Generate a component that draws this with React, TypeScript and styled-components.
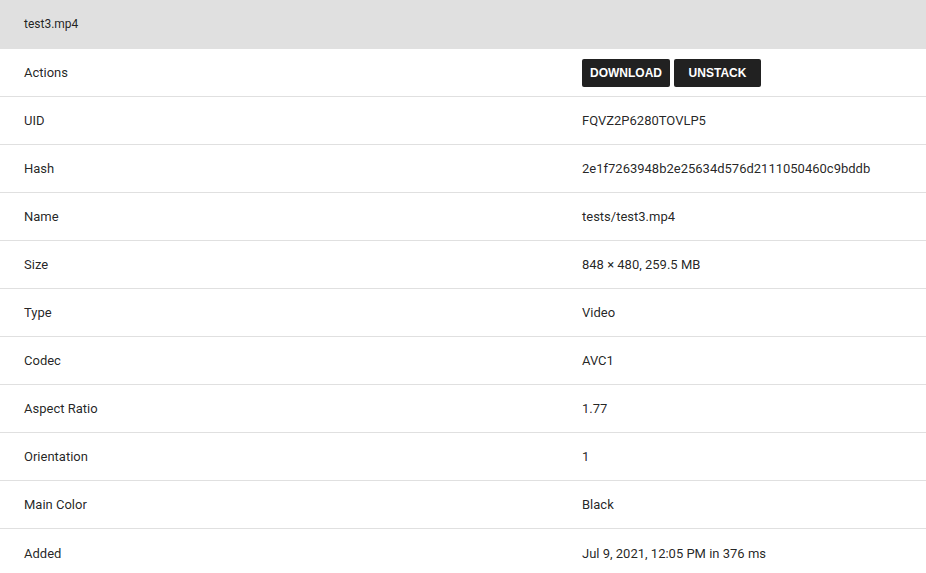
import React from "react";
import styled, { createGlobalStyle } from "styled-components";

const Global = createGlobalStyle`
  html, body { margin: 0; padding: 0; background: #fff; }
  body { font-family: Roboto, "Noto Sans", sans-serif; overflow: hidden; }
`;

const Table = styled.div`
  width: 926px;
  display: flex;
  flex-direction: column;
`;

const Header = styled.div`
  height: 49px;
  box-sizing: border-box;
  background: #e0e0e0;
  display: flex;
  align-items: center;
  padding: 0 24px 2px;
  font-size: 12px;
  color: rgba(0, 0, 0, 0.87);
`;

const Row = styled.div`
  height: 48px;
  display: grid;
  grid-template-columns: 582px 1fr;
  align-items: center;
  border-bottom: 1px solid #e0e0e0;
  box-sizing: border-box;
  font-size: 13px;
  color: rgba(0, 0, 0, 0.87);
  &:last-child { border-bottom: none; }
`;

const Label = styled.div`
  padding-left: 24px;
`;

const Value = styled.div`
  display: flex;
  gap: 4px;
  align-items: center;
`;

const Button = styled.button`
  height: 28px;
  padding: 0 8px;
  min-width: 87px;
  border: none;
  border-radius: 2px;
  background: #212121;
  color: #fff;
  font-family: "Liberation Sans", Arial, sans-serif;
  font-weight: 700;
  font-size: 12px;
  text-transform: uppercase;
  cursor: pointer;
`;

const rows: [string, string][] = [
  ["UID", "FQVZ2P6280TOVLP5"],
  ["Hash", "2e1f7263948b2e25634d576d2111050460c9bddb"],
  ["Name", "tests/test3.mp4"],
  ["Size", "848 × 480, 259.5 MB"],
  ["Type", "Video"],
  ["Codec", "AVC1"],
  ["Aspect Ratio", "1.77"],
  ["Orientation", "1"],
  ["Main Color", "Black"],
  ["Added", "Jul 9, 2021, 12:05 PM in 376 ms"],
];

export default function App() {
  return (
    <>
      <Global />
      <Table>
        <Header>test3.mp4</Header>
        <Row>
          <Label>Actions</Label>
          <Value>
            <Button>Download</Button>
            <Button>Unstack</Button>
          </Value>
        </Row>
        {rows.map(([k, v]) => (
          <Row key={k}>
            <Label>{k}</Label>
            <Value>{v}</Value>
          </Row>
        ))}
      </Table>
    </>
  );
}
